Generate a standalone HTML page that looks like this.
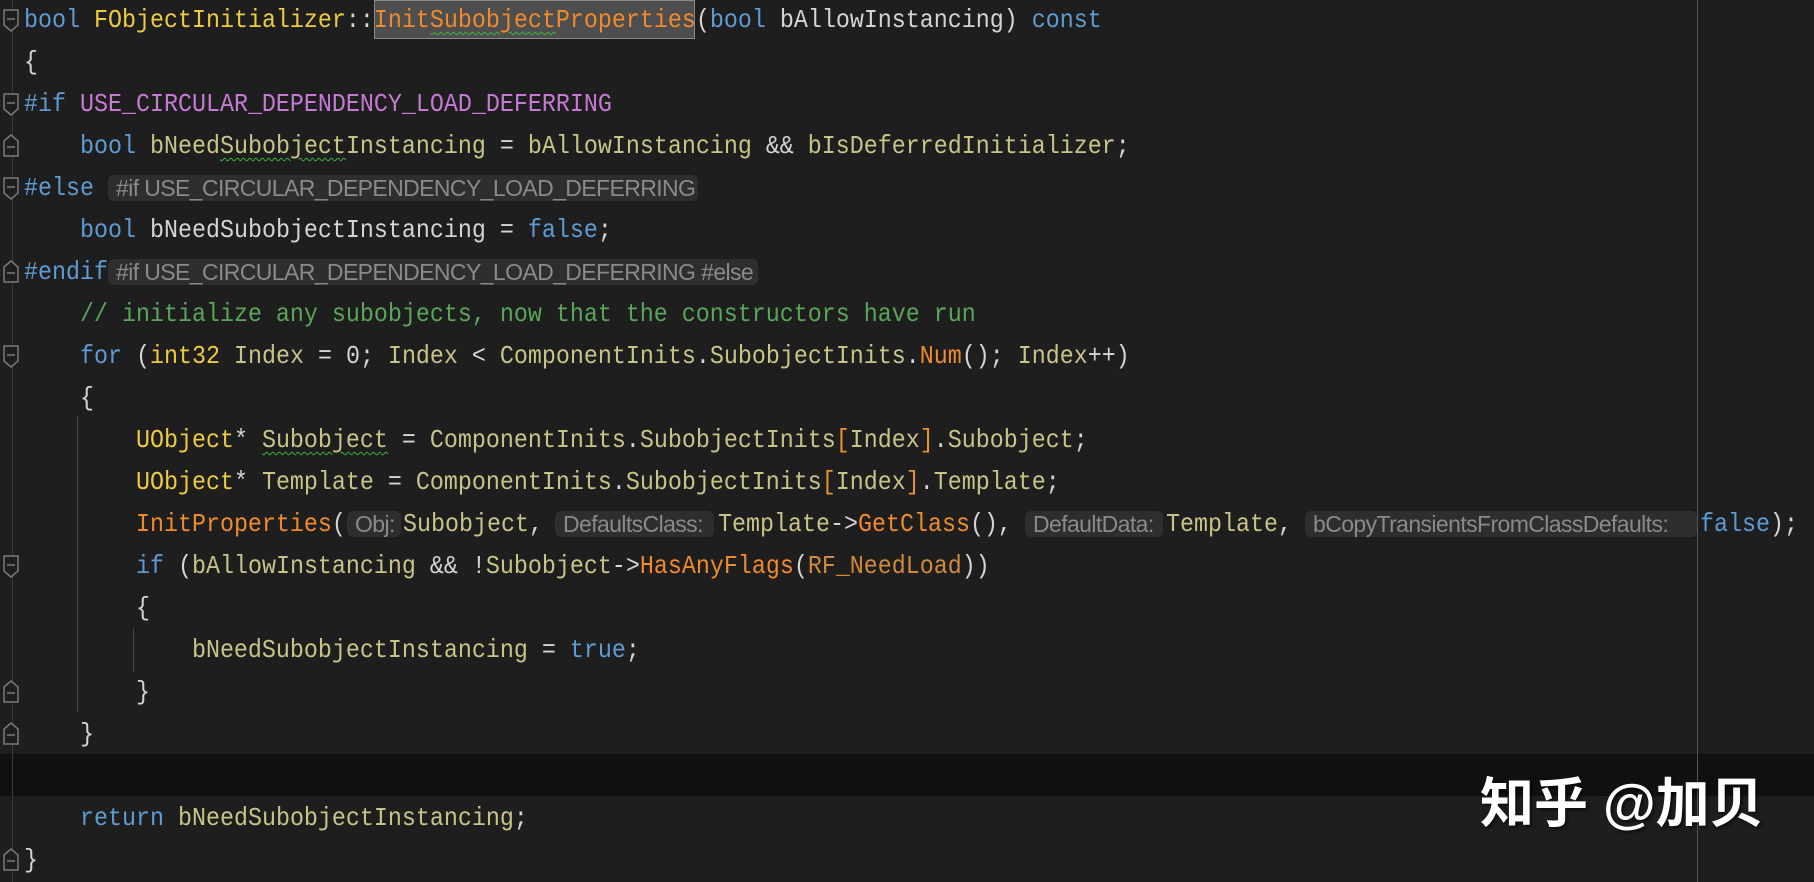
<!DOCTYPE html>
<html><head><meta charset="utf-8"><style>
html,body{margin:0;padding:0}
body{width:1814px;height:882px;background:#1e1e1e;position:relative;overflow:hidden;font-family:"Liberation Mono",monospace;font-size:26px;color:#d4d4d4}
.l{position:absolute;left:24px;height:42px;line-height:42px;white-space:pre;transform:scaleX(0.897);transform-origin:0 0}
.k{color:#5f9bd3}.y{color:#eccb3f}.f{color:#f08a2c}.p{color:#c57ad4}.v{color:#c8c488}.c{color:#5aa55a}.w{color:#d4d4d4}.o{color:#e9912e}
.h{position:absolute;height:26px;line-height:26px;background:#2e2e2e;border-radius:6px;color:#8a8a8a;font-family:"Liberation Sans",sans-serif;font-size:23px;padding-left:8px;box-sizing:border-box;white-space:pre;letter-spacing:-0.6px;overflow:hidden}
.sq{text-decoration:underline wavy #3fb63f;text-decoration-thickness:1px;text-underline-offset:4px}
.g{position:absolute;background:#454545;width:1px}
</style></head><body>
<div style="position:absolute;left:0;top:754px;width:1814px;height:42px;background:#101010"></div>
<div class="g" style="left:12px;top:0;height:882px;background:#3a3a3a"></div>
<div class="g" style="left:77px;top:416px;height:296px"></div>
<div class="g" style="left:133px;top:628px;height:44px"></div>
<div class="g" style="left:1697px;top:0;height:882px;background:#555"></div>
<div style="position:absolute;left:374px;top:0;width:321px;height:39px;background:#4e4e4e;border:1px solid #8a8a8a;box-sizing:border-box"></div>

<svg width="24" height="882" style="position:absolute;left:0;top:0" fill="#1e1e1e" stroke="#7a7a7a" stroke-width="1.5">
<path d="M4 10 H18 V25 L11 31 L4 25 Z M7 19 H15"/>
<path transform="translate(0,84)" d="M4 10 H18 V25 L11 31 L4 25 Z M7 19 H15"/>
<path transform="translate(0,126)" d="M4 30 H18 V15 L11 9 L4 15 Z M7 21 H15"/>
<path transform="translate(0,168)" d="M4 10 H18 V25 L11 31 L4 25 Z M7 19 H15"/>
<path transform="translate(0,252)" d="M4 30 H18 V15 L11 9 L4 15 Z M7 21 H15"/>
<path transform="translate(0,336)" d="M4 10 H18 V25 L11 31 L4 25 Z M7 19 H15"/>
<path transform="translate(0,546)" d="M4 10 H18 V25 L11 31 L4 25 Z M7 19 H15"/>
<path transform="translate(0,672)" d="M4 30 H18 V15 L11 9 L4 15 Z M7 21 H15"/>
<path transform="translate(0,714)" d="M4 30 H18 V15 L11 9 L4 15 Z M7 21 H15"/>
<path transform="translate(0,840)" d="M4 30 H18 V15 L11 9 L4 15 Z M7 21 H15"/>
</svg>

<div class="l" style="top:-1px"><span class="k">bool</span> <span class="y">FObjectInitializer</span>::<span class="f">Init<span class="sq">Subobject</span>Properties</span>(<span class="k">bool</span> bAllowInstancing) <span class="k">const</span></div>
<div class="l" style="top:41px">{</div>
<div class="l" style="top:83px"><span class="k">#if</span> <span class="p">USE_CIRCULAR_DEPENDENCY_LOAD_DEFERRING</span></div>
<div class="l" style="top:125px">    <span class="k">bool</span> <span class="v">bNeed<span class="sq">Subobject</span>Instancing</span> = <span class="v">bAllowInstancing</span> &amp;&amp; <span class="v">bIsDeferredInitializer</span>;</div>
<div class="l" style="top:167px"><span class="k">#else</span></div>
<div class="h" style="left:108px;top:175px;width:590px">#if USE_CIRCULAR_DEPENDENCY_LOAD_DEFERRING</div>
<div class="l" style="top:209px">    <span class="k">bool</span> bNeedSubobjectInstancing = <span class="k">false</span>;</div>
<div class="l" style="top:251px"><span class="k">#endif</span></div>
<div class="h" style="left:108px;top:259px;width:650px">#if USE_CIRCULAR_DEPENDENCY_LOAD_DEFERRING #else</div>
<div class="l" style="top:293px">    <span class="c">// initialize any subobjects, now that the constructors have run</span></div>
<div class="l" style="top:335px">    <span class="k">for</span> (<span class="y">int32</span> <span class="v">Index</span> = <span class="w">0</span>; <span class="v">Index</span> &lt; <span class="v">ComponentInits</span>.<span class="v">SubobjectInits</span>.<span class="f">Num</span>(); <span class="v">Index</span>++)</div>
<div class="l" style="top:377px">    {</div>
<div class="l" style="top:419px">        <span class="y">UObject</span>* <span class="v sq">Subobject</span> = <span class="v">ComponentInits</span>.<span class="v">SubobjectInits</span><span class="o">[</span><span class="v">Index</span><span class="o">]</span>.<span class="v">Subobject</span>;</div>
<div class="l" style="top:461px">        <span class="y">UObject</span>* <span class="v">Template</span> = <span class="v">ComponentInits</span>.<span class="v">SubobjectInits</span><span class="o">[</span><span class="v">Index</span><span class="o">]</span>.<span class="v">Template</span>;</div>
<div class="l" style="top:503px">        <span class="f">InitProperties</span>(</div>
<div class="h" style="left:347px;top:511px;width:54px">Obj:</div>
<div class="l" style="top:503px;left:403px"><span class="v">Subobject</span>,</div>
<div class="h" style="left:555px;top:511px;width:159px">DefaultsClass:</div>
<div class="l" style="top:503px;left:718px"><span class="v">Template</span>-&gt;<span class="f">GetClass</span>(),</div>
<div class="h" style="left:1025px;top:511px;width:138px">DefaultData:</div>
<div class="l" style="top:503px;left:1166px"><span class="v">Template</span>,</div>
<div class="h" style="left:1305px;top:511px;width:392px">bCopyTransientsFromClassDefaults:</div>
<div class="l" style="top:503px;left:1700px"><span class="k">false</span>);</div>
<div class="l" style="top:545px">        <span class="k">if</span> (<span class="v">bAllowInstancing</span> &amp;&amp; !<span class="v">Subobject</span>-&gt;<span class="f">HasAnyFlags</span>(<span class="o" style="color:#d1893c">RF_NeedLoad</span>))</div>
<div class="l" style="top:587px">        {</div>
<div class="l" style="top:629px">            <span class="v">bNeedSubobjectInstancing</span> = <span class="k">true</span>;</div>
<div class="l" style="top:671px">        }</div>
<div class="l" style="top:713px">    }</div>
<div class="l" style="top:797px">    <span class="k">return</span> <span class="v">bNeedSubobjectInstancing</span>;</div>
<div class="l" style="top:839px">}</div>

<div style="position:absolute;left:1480px;top:772px;color:#fff;font-family:'Liberation Sans','Noto Sans CJK SC',sans-serif;font-size:54px;font-weight:bold;line-height:64px;white-space:pre;text-shadow:2px 2px 3px rgba(0,0,0,.6)">知乎 @加贝</div>
</body></html>
